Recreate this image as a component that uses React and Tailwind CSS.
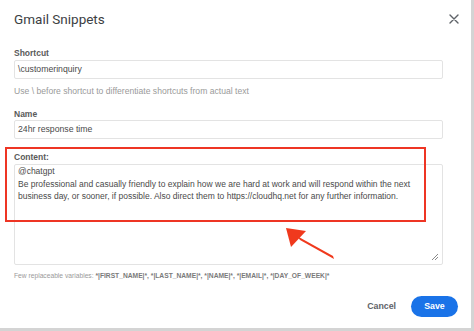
import React from 'react';

const fieldBox = 'w-[429px] border border-[#e3e3e3] rounded-[2px] bg-white text-[#4a4a4a]';

function CloseIcon() {
  return (
    <svg width="10" height="10" viewBox="0 0 10 10" className="text-[#5f6368]">
      <path d="M1 1 L9 9 M9 1 L1 9" stroke="currentColor" strokeWidth="1.4" strokeLinecap="round" />
    </svg>
  );
}

function Grip() {
  return (
    <svg width="8" height="8" viewBox="0 0 8 8" className="absolute right-[3px] bottom-[3px] text-[#8a8a8a]">
      <path d="M7 1 L1 7 M7 4 L4 7" stroke="currentColor" strokeWidth="1" />
    </svg>
  );
}

function Arrow() {
  // annotation arrow pointing up-left at the red box
  return (
    <svg width="60" height="40" viewBox="280 224 60 40" className="absolute left-[280px] top-[224px]">
      <polygon points="286,228 306,231 291,247" fill="#f0391d" />
      <polygon points="297,236 300,240 334,259 333,256" fill="#f0391d" />
    </svg>
  );
}

export default function App() {
  return (
    <div className="w-[474px] h-[331px] bg-[#d4d4d4] overflow-hidden" style={{ fontFamily: '"Liberation Sans", Arial, sans-serif' }}>
      <div className="relative w-[471px] h-[328px] bg-white px-[14px]">
        {/* header */}
        <div className="h-[39px] flex items-center justify-between">
          <h1 className="text-[13.5px] text-[#3c4043]" style={{ fontFamily: 'Roboto, "Open Sans", sans-serif' }}>Gmail Snippets</h1>
          <div className="mr-[-2px] mt-[-1px]">
            <CloseIcon />
          </div>
        </div>

        <div className="mt-[8px] text-[8.5px] leading-[12px] font-bold text-[#5a5a5a]">Shortcut</div>
        <div className={`${fieldBox} mt-[1px] h-[19px] px-[3px] text-[8.7px] leading-[17px]`}>\customerinquiry</div>
        <div className="mt-[6px] text-[8.6px] leading-[12px] text-[#9a9a9a]">Use \ before shortcut to differentiate shortcuts from actual text</div>

        <div className="mt-[11px] text-[8.5px] leading-[12px] font-bold text-[#5a5a5a]">Name</div>
        <div className={`${fieldBox} h-[19px] px-[3px] text-[8.7px] leading-[17px]`}>24hr response time</div>

        <div className="mt-[12px] text-[8.5px] leading-[12px] font-bold text-[#5a5a5a]">Content:</div>
        <div className={`${fieldBox} relative mt-[1px] h-[101px] px-[3px] text-[8.5px] leading-[12.5px]`}>
          <div>@chatgpt</div>
          <div className="w-[400px]">Be professional and casually friendly to explain how we are hard at work and will respond within the next business day, or sooner, if possible. Also direct them to https://cloudhq.net for any further information.</div>
          <Grip />
        </div>

        <div className="mt-[6px] text-[6.7px] leading-[10px] text-[#9a9a9a]">
          Few replaceable variables: <span className="font-bold text-[#7a7a7a]">*|FIRST_NAME|*, *|LAST_NAME|*, *|NAME|*, *|EMAIL|*, *|DAY_OF_WEEK|*</span>
        </div>

        <div className="mt-[15px] flex items-center justify-end gap-[15px] mr-[-1px]">
          <button className="text-[8.8px] font-bold text-[#5f6368]">Cancel</button>
          <button className="h-[21px] w-[47px] rounded-full bg-[#1a73e8] text-white text-[8.8px] font-bold">Save</button>
        </div>

        {/* annotation overlay */}
        <div className="absolute left-[5px] top-[147px] w-[421px] h-[75px] border-2 border-[#ee3524]" />
        <Arrow />
      </div>
    </div>
  );
}
